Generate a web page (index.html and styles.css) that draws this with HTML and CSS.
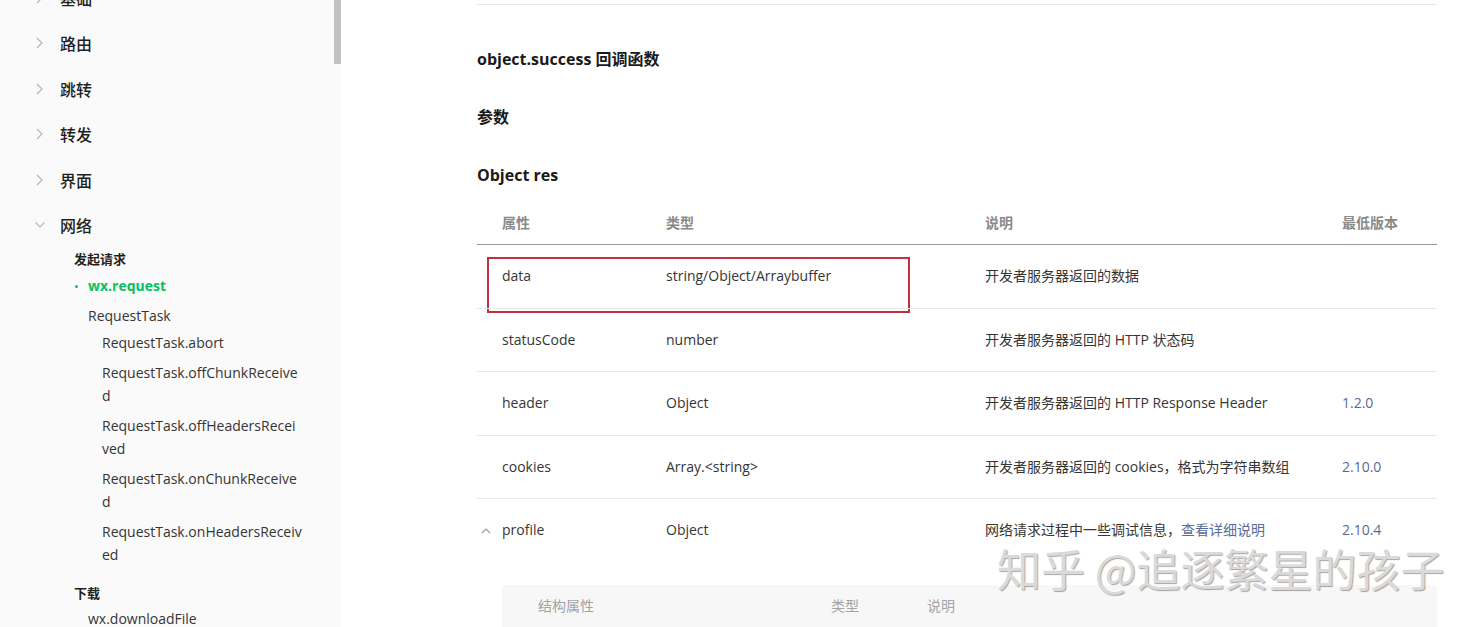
FILE: index.html
```html
<!DOCTYPE html>
<html lang="zh-CN">
<head>
<meta charset="utf-8">
<title>wx.request</title>
<link rel="stylesheet" href="styles.css">
</head>
<body>
<div class="page">
  <aside class="sidebar">
    <nav class="nav">
      <ul class="cats">
        <li class="cat"><svg class="chev" viewBox="0 0 12 12"><polyline points="3,1 8,6 3,11"/></svg><span>基础</span></li>
        <li class="cat"><svg class="chev" viewBox="0 0 12 12"><polyline points="3,1 8,6 3,11"/></svg><span>路由</span></li>
        <li class="cat"><svg class="chev" viewBox="0 0 12 12"><polyline points="3,1 8,6 3,11"/></svg><span>跳转</span></li>
        <li class="cat"><svg class="chev" viewBox="0 0 12 12"><polyline points="3,1 8,6 3,11"/></svg><span>转发</span></li>
        <li class="cat"><svg class="chev" viewBox="0 0 12 12"><polyline points="3,1 8,6 3,11"/></svg><span>界面</span></li>
        <li class="cat"><svg class="chev" viewBox="0 0 12 12"><polyline points="1.5,3.5 6,8 10.5,3.5"/></svg><span>网络</span></li>
      </ul>
      <div class="subnav">
        <div class="grp">发起请求</div>
        <div class="leaf active">wx.request</div>
        <div class="leaf sub-title">RequestTask</div>
        <div class="leaf l3">RequestTask.abort</div>
        <div class="leaf l3">RequestTask.offChunkReceived</div>
        <div class="leaf l3">RequestTask.offHeadersReceived</div>
        <div class="leaf l3">RequestTask.onChunkReceived</div>
        <div class="leaf l3">RequestTask.onHeadersReceived</div>
        <div class="grp grp-next">下载</div>
        <div class="leaf">wx.downloadFile</div>
      </div>
    </nav>
    <div class="scrollbar"><div class="thumb"></div></div>
  </aside>

  <main class="main">
    <div class="content">
      <div class="prev-end"></div>
      <h3 class="title first">object.success 回调函数</h3>
      <h4 class="title">参数</h4>
      <h4 class="title">Object res</h4>

      <div class="table">
        <div class="row head">
          <div class="cell">属性</div>
          <div class="cell">类型</div>
          <div class="cell">说明</div>
          <div class="cell">最低版本</div>
        </div>
        <div class="row">
          <div class="cell">data</div>
          <div class="cell">string/Object/Arraybuffer</div>
          <div class="cell">开发者服务器返回的数据</div>
          <div class="cell ver"></div>
          <div class="mark"></div>
        </div>
        <div class="row">
          <div class="cell">statusCode</div>
          <div class="cell">number</div>
          <div class="cell">开发者服务器返回的 HTTP 状态码</div>
          <div class="cell ver"></div>
        </div>
        <div class="row">
          <div class="cell">header</div>
          <div class="cell">Object</div>
          <div class="cell">开发者服务器返回的 HTTP Response Header</div>
          <div class="cell ver">1.2.0</div>
        </div>
        <div class="row">
          <div class="cell">cookies</div>
          <div class="cell">Array.&lt;string&gt;</div>
          <div class="cell">开发者服务器返回的 cookies，格式为字符串数组</div>
          <div class="cell ver">2.10.0</div>
        </div>
        <div class="row expanded">
          <div class="cell name-cell"><svg class="up" viewBox="0 0 10 6"><polyline points="1,5 5,1 9,5"/></svg>profile</div>
          <div class="cell">Object</div>
          <div class="cell">网络请求过程中一些调试信息，<span class="link">查看详细说明</span></div>
          <div class="cell ver">2.10.4</div>
          <div class="nested">
            <div class="nrow">
              <div class="ncell">结构属性</div>
              <div class="ncell">类型</div>
              <div class="ncell">说明</div>
            </div>
          </div>
        </div>
      </div>
    </div>
  </main>

  <div class="watermark">知乎 @追逐繁星的孩子</div>
</div>
</body>
</html>
```

FILE: styles.css
```css
* { box-sizing: border-box; }
html, body {
  margin: 0;
  padding: 0;
  height: 627px;
  overflow: hidden;
  background: #fff;
}
body {
  font-family: "Open Sans", "Noto Sans CJK SC", sans-serif;
  color: #353535;
  font-size: 14px;
}
.page {
  position: relative;
  display: flex;
  height: 627px;
  overflow: hidden;
}

/* sidebar */
.sidebar {
  width: 341px;
  flex: none;
  display: flex;
  background: #fafafa;
}
.nav {
  width: 334px;
  flex: none;
}
.cats {
  list-style: none;
  margin: -25px 0 0;
  padding: 0 0 0 34px;
}
.cat {
  height: 45.5px;
  display: flex;
  align-items: center;
  font-family: "Noto Sans CJK SC", sans-serif;
  font-size: 16px;
  font-weight: 500;
  color: #1f1f1f;
}
.chev {
  width: 12px;
  height: 12px;
  margin-right: 14px;
  fill: none;
  stroke: #b5b5b5;
  stroke-width: 1.2;
}
.subnav {
  padding-right: 32px;
}
.grp {
  padding-left: 74px;
  line-height: 22px;
  font-family: "Noto Sans CJK SC", sans-serif;
  font-weight: 700;
  font-size: 13px;
  color: #1f1f1f;
}
.grp-next { margin-top: 12px; }
.leaf {
  padding: 3.5px 0 3.5px 88px;
  line-height: 23px;
  color: #353535;
  word-break: break-all;
}
.leaf.sub-title { padding-bottom: 1px; }
.leaf.l3 { padding-left: 102px; }
.leaf.active {
  color: #07c160;
  font-weight: 700;
}
.leaf.active::before {
  content: "";
  display: inline-block;
  width: 3px;
  height: 3px;
  border-radius: 50%;
  background: #07c160;
  margin-left: -13px;
  margin-right: 10px;
  vertical-align: middle;
}
.scrollbar {
  width: 7px;
  flex: none;
}
.thumb {
  height: 64px;
  background: #c1c1c1;
}

/* main */
.main {
  flex: 1;
  padding-left: 136px;
}
.content { width: 960px; }
.prev-end {
  height: 5px;
  border-bottom: 1px solid #e8e8e8;
}
.title {
  margin: 34px 0 0;
  line-height: 24px;
  font-size: 16px;
  font-weight: 700;
  color: #1a1a1a;
  font-family: "Open Sans", "Noto Sans CJK SC", sans-serif;
}
.title.first { margin-top: 42px; }

.table { margin-top: 15px; }
.row {
  position: relative;
  display: grid;
  grid-template-columns: 164px 319px 357px 120px;
  border-top: 1px solid #e8e8e8;
  padding: 20px 0 20.5px;
}
.row.head {
  border-top: 0;
  border-bottom: 1px solid #9a9a9a;
  padding: 10px 0 10px;
}
.row.head + .row { border-top: 0; }
.cell {
  padding-left: 25px;
  line-height: 22px;
  white-space: nowrap;
}
.row.head .cell {
  color: #8a8a8a;
  font-weight: 600;
}
.ver { color: #576b95; }
.link { color: #576b95; }
.name-cell { position: relative; }
.up {
  position: absolute;
  left: 4px;
  top: 9px;
  width: 10px;
  height: 6px;
  fill: none;
  stroke: #9a9a9a;
  stroke-width: 1.1;
}
.mark {
  position: absolute;
  left: 10px;
  top: 12px;
  width: 423px;
  height: 56px;
  border: 2px solid #c3303d;
}
.row.expanded { padding-bottom: 0; }
.nested {
  grid-column: 1 / -1;
  margin: 44px 0 0 25px;
  background: #f7f7f7;
  border-radius: 4px 4px 0 0;
  height: 60px;
}
.nrow {
  display: grid;
  grid-template-columns: 329px 96px 1fr;
  padding: 10px 0 0;
}
.ncell {
  padding-left: 36px;
  line-height: 22px;
  color: #a3a3a3;
}
.ncell + .ncell { padding-left: 0; }

.watermark {
  position: absolute;
  left: 997px;
  top: 546px;
  font-family: "Noto Sans CJK SC", sans-serif;
  font-size: 44px;
  line-height: 44px;
  letter-spacing: 0;
  color: #dadada;
  text-shadow: 1px 1px 1px rgba(0,0,0,0.35), -1px -1px 0 rgba(255,255,255,0.8);
  white-space: nowrap;
}
```
